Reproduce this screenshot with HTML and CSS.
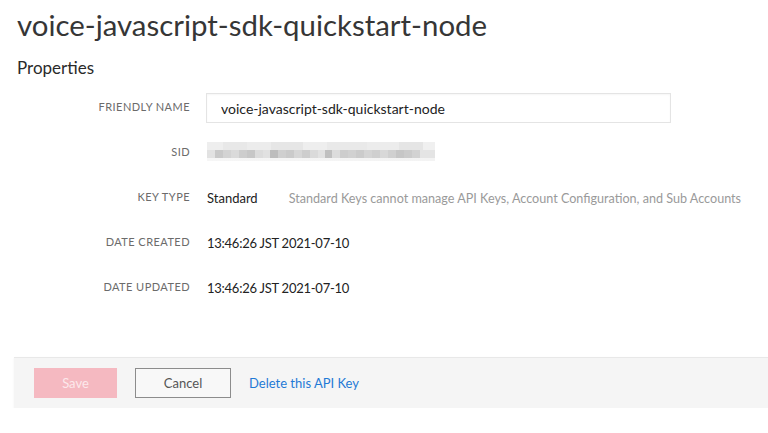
FILE: index.html
```html
<!DOCTYPE html>
<html>
<head>
<meta charset="utf-8">
<link rel="stylesheet" href="styles.css">
</head>
<body>
<div class="page">
  <h1 class="title">voice-javascript-sdk-quickstart-node</h1>
  <h2 class="subtitle">Properties</h2>
  <div class="form">
    <div class="label">Friendly name</div>
    <div class="value"><input class="input" type="text" value="voice-javascript-sdk-quickstart-node"></div>
    <div class="label">SID</div>
    <div class="value"><div class="redacted" aria-label="redacted SID"></div></div>
    <div class="label">Key type</div>
    <div class="value"><span class="strong">Standard</span><span class="hint">Standard Keys cannot manage API Keys, Account Configuration, and Sub Accounts</span></div>
    <div class="label">Date created</div>
    <div class="value date">13:46:26 JST 2021-07-10</div>
    <div class="label">Date updated</div>
    <div class="value date">13:46:26 JST 2021-07-10</div>
  </div>
</div>
<div class="footer">
  <button class="btn btn-save" type="button">Save</button>
  <button class="btn btn-cancel" type="button">Cancel</button>
  <a class="link" href="#">Delete this API Key</a>
</div>
</body>
</html>
```
FILE: styles.css
```css
html, body {
  margin: 0;
  padding: 0;
  background: #ffffff;
  font-family: Lato, "Open Sans", sans-serif;
  color: #222222;
  overflow: hidden;
}
.page {
  padding: 0 0 0 17px;
}
.title {
  margin: 0;
  padding-top: 5px;
  font-size: 29.4px;
  font-weight: 400;
  line-height: 40px;
  color: #363636;
}
.subtitle {
  margin: 12px 0 0 0;
  font-size: 17px;
  font-weight: 400;
  line-height: 22px;
  color: #2a2a2a;
}
.form {
  display: grid;
  grid-template-columns: 173px 1fr;
  grid-auto-rows: 30px;
  column-gap: 17px;
  row-gap: 15px;
  margin-top: 14px;
  align-items: center;
}
.label {
  text-align: right;
  text-transform: uppercase;
  font-size: 11px;
  letter-spacing: 0.45px;
  color: #6b6b6b;
  padding-bottom: 4px;
}
.value {
  font-size: 13px;
  color: #222222;
  display: flex;
  align-items: center;
}
.date {
  letter-spacing: -0.25px;
}
.input {
  box-sizing: border-box;
  width: 465px;
  height: 30px;
  border: 1px solid #e4e4e4;
  box-shadow: inset 0 1px 2px rgba(0,0,0,0.04);
  padding: 0 14px;
  font-family: inherit;
  font-size: 14px;
  color: #222222;
  margin-left: -1px;
}
.redacted {
  width: 228px;
  height: 19px;
  margin-top: -3px;
  background:
    linear-gradient(90deg,
      #e2e2e2 0 8px, #c9c9c9 8px 16px, #d3d3d3 16px 24px, #dadada 24px 32px,
      #cdcdcd 32px 40px, #c7c7c7 40px 48px, #dcdcdc 48px 56px, #e1e1e1 56px 63px,
      #bdbdbd 63px 71px, #cfcfcf 71px 79px, #cacaca 79px 87px, #d6d6d6 87px 95px,
      #cdcdcd 95px 103px, #dadada 103px 111px, #e2e2e2 111px 118px, #c0c0c0 118px 125px,
      #dcdcdc 125px 133px, #cdcdcd 133px 141px, #d1d1d1 141px 149px, #cbcbcb 149px 157px,
      #d4d4d4 157px 165px, #cfcfcf 165px 173px, #d8d8d8 173px 181px, #d0d0d0 181px 189px,
      #c6c6c6 189px 197px, #cbcbcb 197px 205px, #d2d2d2 205px 213px, #e4e4e4 213px 228px)
      0 8px / 100% 8px no-repeat,
    linear-gradient(90deg,
      #eeeeee 0 16px, #e8e8e8 16px 40px, #ececec 40px 64px, #e6e6e6 64px 96px,
      #eeeeee 96px 120px, #e9e9e9 120px 160px, #ececec 160px 192px, #e5e5e5 192px 216px,
      #f0f0f0 216px 228px)
      0 0 / 100% 8px no-repeat,
    linear-gradient(90deg, #f6f6f6, #f3f3f3)
      0 16px / 100% 3px no-repeat;
}
.strong {
  color: #222222;
}
.hint {
  margin-left: 31px;
  font-size: 12.6px;
  color: #9a9a9a;
}
.footer {
  margin: 54px 0 0 14px;
  height: 50px;
  background: #f5f5f5;
  border-top: 1px solid #e8e8e8;
  box-shadow: 0 1px 2px rgba(0,0,0,0.06);
  display: flex;
  align-items: center;
  gap: 18px;
  padding-left: 20px;
}
.btn {
  box-sizing: border-box;
  height: 30px;
  font-family: inherit;
  font-size: 13px;
  padding: 0;
}
.btn-save {
  width: 83px;
  background: #f5b9c1;
  border: none;
  color: #fce8eb;
}
.btn-cancel {
  width: 96px;
  background: #f8f8f8;
  border: 1px solid #8c8c8c;
  color: #555555;
}
.link {
  font-size: 13px;
  color: #1f7ad6;
  text-decoration: none;
}
```
